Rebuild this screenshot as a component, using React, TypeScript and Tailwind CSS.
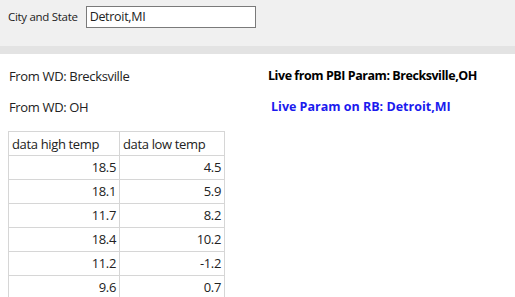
import React from "react";

const rows: [string, string][] = [
  ["18.5", "4.5"],
  ["18.1", "5.9"],
  ["11.7", "8.2"],
  ["18.4", "10.2"],
  ["11.2", "-1.2"],
  ["9.6", "0.7"],
];

export default function App() {
  return (
    <div
      className="w-[515px] h-[297px] overflow-hidden bg-white text-[#222]"
      style={{ fontFamily: '"Open Sans", "Noto Sans", sans-serif' }}
    >
      <div className="h-[46px] bg-[#f0f0f0] flex items-start pt-[6px]">
        <span className="ml-[8px] mt-[4px] text-[11.5px] leading-[14px] tracking-[-0.3px]">City and State</span>
        <div className="ml-[8px] w-[170px] h-[22px] border border-[#7a7a7a] bg-white flex items-center pl-[3px] text-[12.5px] tracking-[-0.3px]">
          Detroit,MI
        </div>
      </div>
      <div className="h-[8px] bg-[#e3e3e3]" />
      <div className="flex">
        <div className="w-[259px] pl-[8px]">
          <div className="mt-[13px] h-[18px] pl-[1px] text-[13px] leading-[18px] tracking-[-0.35px]">From WD: Brecksville</div>
          <div className="mt-[13px] h-[18px] pl-[1px] text-[13px] leading-[18px] tracking-[-0.35px]">From WD: OH</div>
          <table className="mt-[15px] border-collapse text-[13px] tracking-[-0.35px]">
            <thead>
              <tr className="h-[24px]">
                <th className="w-[111px] border border-[#d6d6d6] text-left font-normal pl-[3px] leading-[18px]">data high temp</th>
                <th className="w-[105px] border border-[#d6d6d6] text-left font-normal pl-[3px] leading-[18px]">data low temp</th>
              </tr>
            </thead>
            <tbody>
              {rows.map(([h, l], i) => (
                <tr key={i} className="h-[24px]">
                  <td className="border border-[#d6d6d6] text-right pr-[3px]">{h}</td>
                  <td className="border border-[#d6d6d6] text-right pr-[3px]">{l}</td>
                </tr>
              ))}
            </tbody>
          </table>
        </div>
        <div className="flex-1">
          <div className="mt-[13px] h-[18px] pl-[9px] text-[12.5px] leading-[18px] font-bold text-black tracking-[-0.45px]">
            Live from PBI Param: Brecksville,OH
          </div>
          <div className="mt-[13px] h-[18px] pl-[12px] text-[12.5px] leading-[18px] font-bold text-[#1a1aee] tracking-[0px]">
            Live Param on RB: Detroit,MI
          </div>
        </div>
      </div>
    </div>
  );
}
